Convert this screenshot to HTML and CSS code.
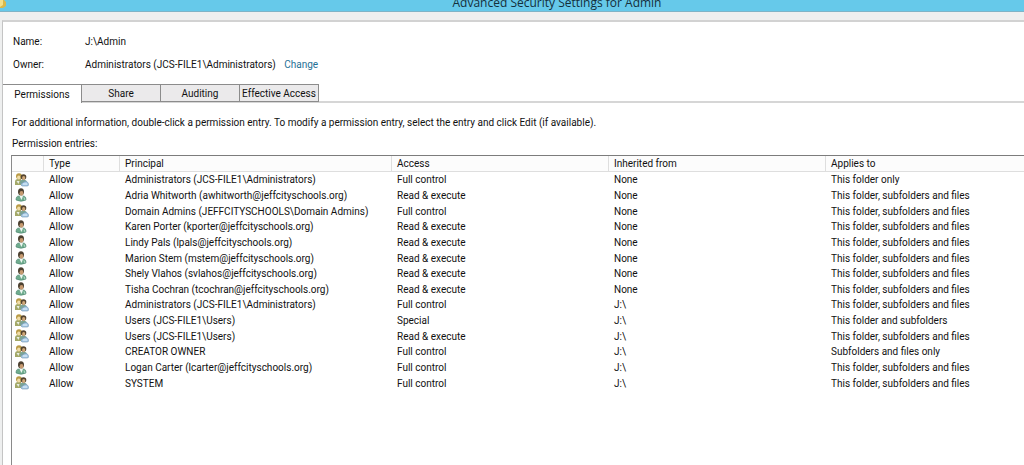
FILE: index.html
```html
<!DOCTYPE html>
<html lang="en">
<head>
  <meta charset="UTF-8">
  <meta name="viewport" content="width=device-width, initial-scale=1.0">
  <title>Advanced Security Settings for Admin</title>
  <link rel="stylesheet" href="styles.css">
</head>
<body>

  <!-- Icons used in the list -->
  <svg class="sprite" aria-hidden="true">
    <symbol id="group" viewBox="0 0 14 14">
      <path d="M0 12V9c0-2 1-3 3-3h3v6z" fill="#a3a868"/>
      <circle cx="4" cy="3.200" r="3" fill="#b99a45"/>
      <ellipse cx="3.800" cy="4.400" rx="1.700" ry="2" fill="#f0dca6"/>
      <path d="M1.500 8l2 3 1-3z" fill="#e9efe4"/>
      <path d="M5 11V9c0-2 1-2 3-2h2c1 0 2 1 2 3v1z" fill="#7ba394"/>
      <circle cx="8.500" cy="4" r="2.800" fill="#54442f"/>
      <ellipse cx="8.700" cy="5" rx="1.600" ry="2" fill="#cfa878"/>
      <path d="M6 12c0-2 2-2 3-3 2-1 4 0 4 1 1 1 1 3-1 3H7z" fill="#a9cbe6" stroke="#6f93b3" stroke-width=".6"/>
      <path d="M8 11h4" stroke="#e3f1fb"/>
    </symbol>
    <symbol id="user" viewBox="0 0 14 14">
      <path d="M1 12c0-3 1-4 3-4h4c2 0 3 1 3 4q-5 2.500-10 0z" fill="#6fac8e" stroke="#4d8570" stroke-width=".6"/>
      <path d="M4.500 8l2 4 1.500-4z" fill="#eef6f2"/>
      <ellipse cx="6" cy="3.800" rx="3" ry="3.500" fill="#4c4030"/>
      <ellipse cx="6.500" cy="5.300" rx="1.900" ry="2.400" fill="#c69a70"/>
      <path d="M9 9.500l1 2.500" stroke="#b5dcc8"/>
    </symbol>
  </svg>

  <header class="titlebar">
    <svg class="titlebar-icon" viewBox="0 0 6 8" aria-hidden="true">
      <path d="M0 0h4l2 2v4L3 8H0z" fill="#d9b84a"/>
      <path d="M0 0h3v5L0 7z" fill="#f3e08a"/>
    </svg>
    <h1>Advanced Security Settings for Admin</h1>
  </header>

  <main class="panel">
    <dl class="details">
      <dt>Name:</dt>
      <dd>J:\Admin</dd>
      <dt>Owner:</dt>
      <dd>Administrators (JCS-FILE1\Administrators) <a href="#">Change</a></dd>
    </dl>

    <!-- Tabs -->
    <div class="tabs" role="tablist">
      <button class="tab active" role="tab" aria-selected="true">Permissions</button>
      <button class="tab" role="tab">Share</button>
      <button class="tab" role="tab">Auditing</button>
      <button class="tab" role="tab">Effective Access</button>
    </div>

    <section class="content">
      <p>For additional information, double-click a permission entry. To modify a permission entry, select the entry and click Edit (if available).</p>
      <p id="entries-label">Permission entries:</p>

      <div class="list">
        <table aria-labelledby="entries-label">
          <colgroup>
            <col class="col-icon">
            <col class="col-type">
            <col class="col-principal">
            <col class="col-access">
            <col class="col-inherited">
            <col>
          </colgroup>
          <thead>
            <tr><th></th><th>Type</th><th>Principal</th><th>Access</th><th>Inherited from</th><th>Applies to</th></tr>
          </thead>
          <tbody>
            <tr><td><svg><use href="#group"/></svg></td><td>Allow</td><td>Administrators (JCS-FILE1\Administrators)</td><td>Full control</td><td>None</td><td>This folder only</td></tr>
            <tr><td><svg><use href="#user"/></svg></td><td>Allow</td><td>Adria Whitworth (awhitworth@jeffcityschools.org)</td><td>Read &amp; execute</td><td>None</td><td>This folder, subfolders and files</td></tr>
            <tr><td><svg><use href="#group"/></svg></td><td>Allow</td><td>Domain Admins (JEFFCITYSCHOOLS\Domain Admins)</td><td>Full control</td><td>None</td><td>This folder, subfolders and files</td></tr>
            <tr><td><svg><use href="#user"/></svg></td><td>Allow</td><td>Karen Porter (kporter@jeffcityschools.org)</td><td>Read &amp; execute</td><td>None</td><td>This folder, subfolders and files</td></tr>
            <tr><td><svg><use href="#user"/></svg></td><td>Allow</td><td>Lindy Pals (lpals@jeffcityschools.org)</td><td>Read &amp; execute</td><td>None</td><td>This folder, subfolders and files</td></tr>
            <tr><td><svg><use href="#user"/></svg></td><td>Allow</td><td>Marion Stem (mstem@jeffcityschools.org)</td><td>Read &amp; execute</td><td>None</td><td>This folder, subfolders and files</td></tr>
            <tr><td><svg><use href="#user"/></svg></td><td>Allow</td><td>Shely Vlahos (svlahos@jeffcityschools.org)</td><td>Read &amp; execute</td><td>None</td><td>This folder, subfolders and files</td></tr>
            <tr><td><svg><use href="#user"/></svg></td><td>Allow</td><td>Tisha Cochran (tcochran@jeffcityschools.org)</td><td>Read &amp; execute</td><td>None</td><td>This folder, subfolders and files</td></tr>
            <tr><td><svg><use href="#group"/></svg></td><td>Allow</td><td>Administrators (JCS-FILE1\Administrators)</td><td>Full control</td><td>J:\</td><td>This folder, subfolders and files</td></tr>
            <tr><td><svg><use href="#group"/></svg></td><td>Allow</td><td>Users (JCS-FILE1\Users)</td><td>Special</td><td>J:\</td><td>This folder and subfolders</td></tr>
            <tr><td><svg><use href="#group"/></svg></td><td>Allow</td><td>Users (JCS-FILE1\Users)</td><td>Read &amp; execute</td><td>J:\</td><td>This folder, subfolders and files</td></tr>
            <tr><td><svg><use href="#group"/></svg></td><td>Allow</td><td>CREATOR OWNER</td><td>Full control</td><td>J:\</td><td>Subfolders and files only</td></tr>
            <tr><td><svg><use href="#user"/></svg></td><td>Allow</td><td>Logan Carter (lcarter@jeffcityschools.org)</td><td>Full control</td><td>J:\</td><td>This folder, subfolders and files</td></tr>
            <tr><td><svg><use href="#group"/></svg></td><td>Allow</td><td>SYSTEM</td><td>Full control</td><td>J:\</td><td>This folder, subfolders and files</td></tr>
          </tbody>
        </table>
      </div>
    </section>
  </main>

</body>
</html>
```
FILE: styles.css
```css
/* General Styles */
* {
  box-sizing: border-box;
}

body {
  margin: 0;
  min-height: 100vh;
  display: flex;
  flex-direction: column;
  font-family: Roboto, "Open Sans", sans-serif;
  font-size: 10px;
  line-height: 15px;
  color: #111;
  background: #eeefef;
}

.sprite {
  position: absolute;
  width: 0;
  height: 0;
}

/* Title bar */
.titlebar {
  display: flex;
  align-items: flex-end;
  height: 12px;
  overflow: hidden;
  background: #66c9ea;
  border-bottom: 1px solid #7fb3c6;
}

.titlebar-icon {
  align-self: flex-start;
  width: 6px;
  height: 8px;
}

h1 {
  flex: 1;
  margin: 0;
  padding-left: 84px;
  font-family: "Open Sans", sans-serif;
  font-size: 12px;
  font-weight: 400;
  line-height: 17px;
  text-align: center;
  color: #14303c;
}

/* Panel */
.panel {
  flex: 1;
  display: flex;
  flex-direction: column;
  margin: 8px 0 0 2px;
  background: #fff;
  border-top: 2px solid #d2d2d2;
  border-left: 1px solid #c4c4c4;
}

.details {
  display: grid;
  grid-template-columns: 72px 1fr;
  row-gap: 8px;
  margin: 0;
  padding: 12px 10px;
}

.details dd {
  margin: 0;
}

.details a {
  margin-left: 6px;
  color: #1f7096;
  text-decoration: none;
}

/* Tabs */
.tabs {
  display: flex;
  border-bottom: 2px solid #d6d6d6;
}

.tab {
  width: 79px;
  height: 18px;
  margin-bottom: -1px;
  padding: 0;
  font: inherit;
  color: inherit;
  white-space: nowrap;
  background: #ebeaeb;
  border: 1px solid #8c8c8c;
  border-left: 0;
}

.tab.active {
  height: 19px;
  margin-bottom: -2px;
  background: #fff;
  border-bottom: 0;
}

/* Permission list */
.content {
  flex: 1;
  display: flex;
  flex-direction: column;
  padding: 12px 0 0 8px;
}

.content p {
  margin: 0 0 6px 1px;
}

.content #entries-label {
  margin-bottom: 4px;
}

.list {
  flex: 1;
  background: #fff;
  border-top: 1px solid #7c7c7c;
  border-left: 1px solid #8a8a8a;
}

table {
  width: 100%;
  height: 235px;
  table-layout: fixed;
  border-collapse: separate;
  border-spacing: 0;
}

.col-icon {
  width: 32px;
}

.col-type {
  width: 76px;
}

.col-principal {
  width: 272px;
}

.col-access,
.col-inherited {
  width: 217px;
}

th,
td {
  padding: 0 0 0 5px;
  font-weight: 400;
  text-align: left;
  white-space: nowrap;
}

th {
  background: #fcfcfc;
  border-right: 1px solid #dedede;
  border-bottom: 1px solid #dedede;
}

th:last-child {
  border-right: 0;
}

td:first-child {
  padding-left: 3px;
}

td svg {
  display: block;
  width: 14px;
  height: 14px;
}
```
